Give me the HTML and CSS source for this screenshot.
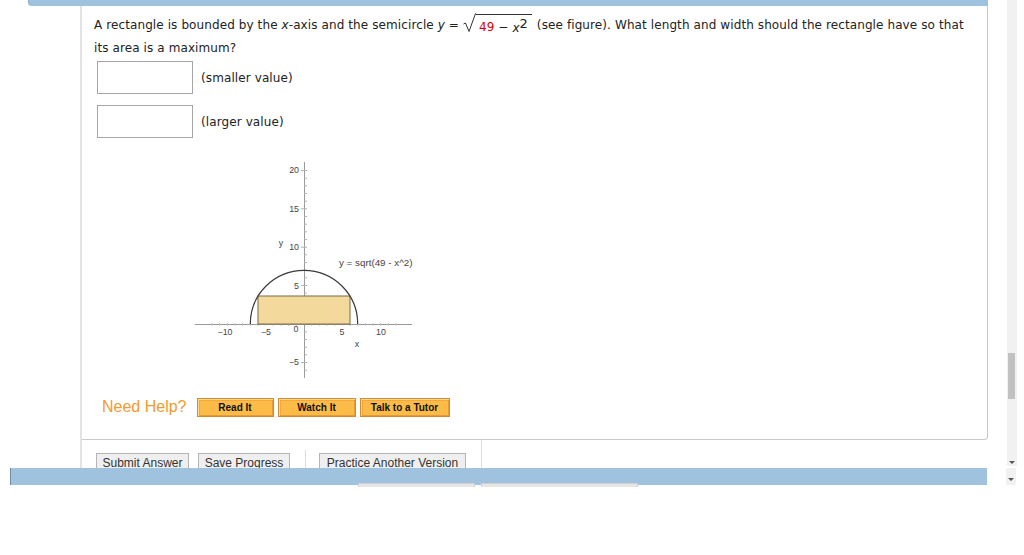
FILE: index.html
```html
<!DOCTYPE html>
<html>
<head>
<meta charset="utf-8">
<link rel="stylesheet" href="styles.css">
</head>
<body>
<div class="topbar"></div>
<div class="column">
  <div class="panel">
    <p class="q">A rectangle is bounded by the <i>x</i>-axis and the semicircle <i>y</i> = <span class="rad"><svg class="rsvg" width="13" height="19" viewBox="0 0 13 19"><polyline points="0.5,11 2.5,10 6,18.5 12.5,0.5 13,0.5" fill="none" stroke="#333" stroke-width="1"/></svg><span class="rin"><span class="red">49</span> − <i class="lx">x</i><span class="up">2</span></span></span> (see figure). What length and width should the rectangle have so that<br>its area is a maximum?</p>
    <div class="ans first"><span class="box"></span><span class="lbl">(smaller value)</span></div>
    <div class="ans"><span class="box"></span><span class="lbl">(larger value)</span></div>
    <svg class="graph" width="240" height="232" viewBox="0 0 240 232">
      <g stroke="#9a9a9a" stroke-width="1" fill="none">
        <line x1="114.5" y1="10" x2="114.5" y2="226"/>
        <line x1="5" y1="172.5" x2="222" y2="172.5"/>
      </g>
      <g stroke="#b3b3b3" stroke-width="1">
        <line x1="114" y1="18.5" x2="117" y2="18.5"/><line x1="114" y1="26.2" x2="117" y2="26.2"/><line x1="114" y1="33.8" x2="117" y2="33.8"/><line x1="114" y1="41.5" x2="117" y2="41.5"/><line x1="114" y1="49.2" x2="117" y2="49.2"/><line x1="114" y1="56.8" x2="117" y2="56.8"/><line x1="114" y1="64.5" x2="117" y2="64.5"/><line x1="114" y1="72.2" x2="117" y2="72.2"/><line x1="114" y1="79.8" x2="117" y2="79.8"/><line x1="114" y1="87.5" x2="117" y2="87.5"/><line x1="114" y1="95.2" x2="117" y2="95.2"/><line x1="114" y1="102.8" x2="117" y2="102.8"/><line x1="114" y1="110.5" x2="117" y2="110.5"/><line x1="114" y1="118.2" x2="117" y2="118.2"/><line x1="114" y1="125.8" x2="117" y2="125.8"/><line x1="114" y1="133.5" x2="117" y2="133.5"/><line x1="114" y1="141.2" x2="117" y2="141.2"/><line x1="114" y1="148.8" x2="117" y2="148.8"/><line x1="114" y1="156.5" x2="117" y2="156.5"/><line x1="114" y1="164.2" x2="117" y2="164.2"/><line x1="114" y1="179.8" x2="117" y2="179.8"/><line x1="114" y1="187.5" x2="117" y2="187.5"/><line x1="114" y1="195.2" x2="117" y2="195.2"/><line x1="114" y1="202.8" x2="117" y2="202.8"/><line x1="114" y1="210.5" x2="117" y2="210.5"/><line x1="114" y1="218.2" x2="117" y2="218.2"/>
        <line x1="111" y1="18.5" x2="114" y2="18.5"/><line x1="111" y1="56.8" x2="114" y2="56.8"/><line x1="111" y1="95.2" x2="114" y2="95.2"/><line x1="111" y1="133.5" x2="114" y2="133.5"/><line x1="111" y1="210.5" x2="114" y2="210.5"/>
      </g>
      <g stroke="#c2c2c2" stroke-width="1">
        <line x1="21.9" y1="171" x2="21.9" y2="174"/><line x1="29.6" y1="171" x2="29.6" y2="174"/><line x1="37.3" y1="171" x2="37.3" y2="174"/><line x1="44.9" y1="171" x2="44.9" y2="174"/><line x1="52.6" y1="171" x2="52.6" y2="174"/><line x1="60.3" y1="171" x2="60.3" y2="174"/><line x1="67.9" y1="171" x2="67.9" y2="174"/><line x1="75.6" y1="171" x2="75.6" y2="174"/><line x1="83.3" y1="171" x2="83.3" y2="174"/><line x1="90.9" y1="171" x2="90.9" y2="174"/><line x1="98.6" y1="171" x2="98.6" y2="174"/><line x1="106.3" y1="171" x2="106.3" y2="174"/><line x1="121.7" y1="171" x2="121.7" y2="174"/><line x1="129.3" y1="171" x2="129.3" y2="174"/><line x1="137" y1="171" x2="137" y2="174"/><line x1="144.7" y1="171" x2="144.7" y2="174"/><line x1="152.3" y1="171" x2="152.3" y2="174"/><line x1="160" y1="171" x2="160" y2="174"/><line x1="167.7" y1="171" x2="167.7" y2="174"/><line x1="175.3" y1="171" x2="175.3" y2="174"/><line x1="183" y1="171" x2="183" y2="174"/><line x1="190.7" y1="171" x2="190.7" y2="174"/><line x1="198.3" y1="171" x2="198.3" y2="174"/><line x1="206" y1="171" x2="206" y2="174"/>
      </g>
      <rect x="68" y="144" width="92" height="28" fill="#f3d99b" stroke="#7a6a45" stroke-width="1"/>
      <path d="M60.3 172 A53.7 53.7 0 0 1 167.7 172" fill="none" stroke="#3a3a3a" stroke-width="1.2"/>
      <g class="tl" fill="#444">
        <text x="109" y="21" text-anchor="end">20</text>
        <text x="109" y="59.5" text-anchor="end">15</text>
        <text x="109" y="98" text-anchor="end">10</text>
        <text x="109" y="137" text-anchor="end">5</text>
        <text x="109" y="213" text-anchor="end">−5</text>
        <text x="91" y="94" text-anchor="middle">y</text>
        <text x="35" y="183" text-anchor="middle">−10</text>
        <text x="76" y="183" text-anchor="middle">−5</text>
        <text x="106" y="180" text-anchor="middle">0</text>
        <text x="152" y="183" text-anchor="middle">5</text>
        <text x="191" y="183" text-anchor="middle">10</text>
        <text x="167" y="195" text-anchor="middle">x</text>
        <text class="eq" x="149" y="114">y = sqrt(49 - x^2)</text>
      </g>
    </svg>
    <div class="help">
      <span class="need">Need Help?</span>
      <button class="hb w1">Read It</button>
      <button class="hb w2">Watch It</button>
      <button class="hb w3">Talk to a Tutor</button>
    </div>
  </div>
  <div class="toolbar">
    <button class="gb b1">Submit Answer</button>
    <button class="gb b2">Save Progress</button>
    <span class="sep1"></span>
    <button class="gb b3">Practice Another Version</button>
    <span class="sep2"></span>
  </div>
</div>
<div class="bottombar"></div>
<div class="tabs"><span class="tab t1"></span><span class="tab t2"></span></div>
<div class="scroll"><div class="thumb"></div><div class="arr a1"></div></div>
<div class="scroll2"><div class="arr a2"></div></div>
</body>
</html>
```
FILE: styles.css
```css
html, body {
  margin: 0;
  padding: 0;
}
body {
  width: 1024px;
  height: 555px;
  overflow: hidden;
  background: #fff;
  position: relative;
  font-family: "DejaVu Sans", Verdana, sans-serif;
  color: #222;
}
.topbar {
  margin-left: 28px;
  width: 959px;
  height: 6px;
  background: #9fc3df;
  border-left: 1px solid #88aecb;
  border-bottom-left-radius: 4px;
}
.column {
  margin-left: 80px;
  width: 906px;
  border-left: 2px solid #e3e3e3;
  height: 464px;
}
.panel {
  box-sizing: border-box;
  height: 434px;
  border-right: 1px solid #c9c9c9;
  border-bottom: 1px solid #c9c9c9;
  border-bottom-right-radius: 4px;
  padding: 7px 0 0 12px;
}
.q {
  margin: 0;
  font-size: 12px;
  line-height: 23px;
  letter-spacing: 0.1px;
}
.rad {
  display: inline-block;
  margin: 0 1px 0 0;
}
.rsvg {
  vertical-align: -3px;
}
.rin {
  display: inline-block;
  vertical-align: -2px;
  border-top: 1px solid #333;
  padding: 4px 4px 0 3px;
  line-height: 16px;
}
.red { color: #e00000; }
.lx { position: relative; top: 1px; }
.up { position: relative; top: -3px; font-size: 13px; }
.ans {
  display: flex;
  align-items: center;
  margin-left: 3px;
  margin-top: 11px;
}
.ans.first { margin-top: 1px; }
.box {
  box-sizing: border-box;
  width: 96px;
  height: 33px;
  border: 1px solid #a5a5a5;
  background: #fff;
}
.lbl {
  font-size: 12px;
  margin-left: 8px;
  letter-spacing: 0.1px;
}
.graph {
  display: block;
  margin: 14px 0 0 96px;
}
.tl text {
  font-family: "Liberation Sans", Arial, sans-serif;
  font-size: 8.8px;
}
.tl text.eq {
  font-size: 9.8px;
}
.help {
  display: flex;
  align-items: center;
  margin-top: 13px;
  margin-left: 8px;
  height: 20px;
}
.need {
  font-family: "Liberation Sans", Arial, sans-serif;
  font-size: 16px;
  color: #f39a2e;
  margin-right: 10px;
}
.hb {
  box-sizing: border-box;
  height: 19px;
  margin: 0 4px 0 0;
  padding: 0;
  font-family: "Liberation Sans", Arial, sans-serif;
  font-weight: bold;
  font-size: 10px;
  color: #111;
  background: #fdbb48;
  border: 1px solid #d68a2c;
  box-shadow: inset 1px 1px 0 #ffdc95, inset -1px -1px 0 #e79b35, inset 2px 2px 0 #f3a83c;
}
.w1 { width: 77px; }
.w2 { width: 78px; }
.w3 { width: 90px; }
.toolbar {
  display: flex;
  align-items: flex-start;
  height: 30px;
  padding-left: 14px;
}
.gb {
  box-sizing: border-box;
  margin: 13px 9px 0 0;
  padding: 2px 0 3px;
  font-family: "Liberation Sans", Arial, sans-serif;
  font-size: 12px;
  color: #333;
  background: #efefef;
  border: 1px solid #b5b5b5;
  line-height: 14px;
  text-align: center;
}
.b1 { width: 93px; }
.b2 { width: 92px; margin-right: 15px; }
.b3 { width: 147px; margin-right: 15px; }
.sep1 {
  width: 1px;
  height: 20px;
  margin: 10px 13px 0 0;
  background: #ddd;
}
.sep2 {
  width: 1px;
  height: 30px;
  background: #ddd;
}
.bottombar {
  position: absolute;
  left: 10px;
  top: 468px;
  width: 976px;
  height: 17px;
  background: #9fc3df;
  border-left: 1px solid #6f8fa8;
}
.tabs {
  position: absolute;
  top: 483px;
  left: 358px;
  display: flex;
}
.tab {
  height: 3px;
  background: #e6e6e6;
  border: 1px solid #d0d0d0;
  border-bottom: none;
}
.t1 { width: 115px; }
.t2 { width: 155px; margin-left: 6px; }
.scroll {
  position: absolute;
  left: 1007px;
  top: 0;
  width: 10px;
  height: 466px;
  background: #f1f1f1;
}
.thumb {
  position: absolute;
  left: 1px;
  top: 353px;
  width: 7px;
  height: 46px;
  background: #c1c1c1;
}
.scroll2 {
  position: absolute;
  left: 1006px;
  top: 468px;
  width: 10px;
  height: 17px;
  background: #f1f1f1;
}
.arr {
  position: absolute;
  left: 2px;
  width: 0;
  height: 0;
  border-left: 3px solid transparent;
  border-right: 3px solid transparent;
  border-top: 3px solid #555;
}
.a1 { top: 461px; }
.a2 { top: 10px; }
```
